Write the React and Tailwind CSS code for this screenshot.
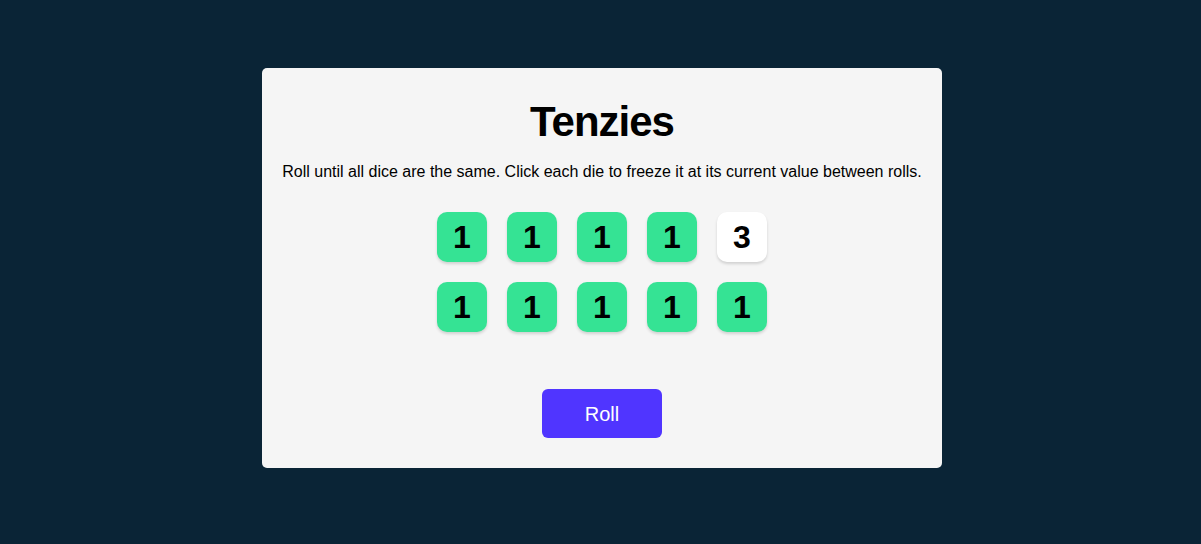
import React, { useState } from 'react';

const Die = ({ value, held, onClick }) => (
  <button
    onClick={onClick}
    className={`w-[50px] h-[50px] rounded-[10px] flex items-center justify-center text-[32px] font-bold text-black shadow-[0_2px_3px_rgba(0,0,0,0.15)] ${
      held ? 'bg-[#35e394]' : 'bg-white'
    }`}
  >
    {value}
  </button>
);

const App = () => {
  const [dice, setDice] = useState([
    { value: 1, held: true },
    { value: 1, held: true },
    { value: 1, held: true },
    { value: 1, held: true },
    { value: 3, held: false },
    { value: 1, held: true },
    { value: 1, held: true },
    { value: 1, held: true },
    { value: 1, held: true },
    { value: 1, held: true },
  ]);

  const hold = (i) =>
    setDice((prev) => prev.map((d, j) => (j === i ? { ...d, held: !d.held } : d)));

  const roll = () =>
    setDice((prev) =>
      prev.map((d) => (d.held ? d : { ...d, value: Math.ceil(Math.random() * 6) }))
    );

  return (
    <div className="min-h-screen bg-[#0a2436] flex justify-center pt-[68px] pl-[3px] font-['Liberation_Sans',Arial,sans-serif]">
      <main className="w-[680px] h-[400px] bg-[#f5f5f5] rounded-[5px] flex flex-col items-center">
        <h1 className="mt-[28px] text-[42px] leading-[52px] font-bold tracking-[-1px] text-black">Tenzies</h1>
        <p className="mt-[14px] text-[16px] leading-[20px] text-black">
          Roll until all dice are the same. Click each die to freeze it at its current value between rolls.
        </p>
        <div className="mt-[30px] grid grid-cols-5 gap-[20px]">
          {dice.map((d, i) => (
            <Die key={i} value={d.value} held={d.held} onClick={() => hold(i)} />
          ))}
        </div>
        <button
          onClick={roll}
          className="mt-[57px] w-[120px] h-[49px] rounded-[6px] bg-[#5035ff] text-white text-[20px]"
        >
          Roll
        </button>
      </main>
    </div>
  );
};

export default App;
